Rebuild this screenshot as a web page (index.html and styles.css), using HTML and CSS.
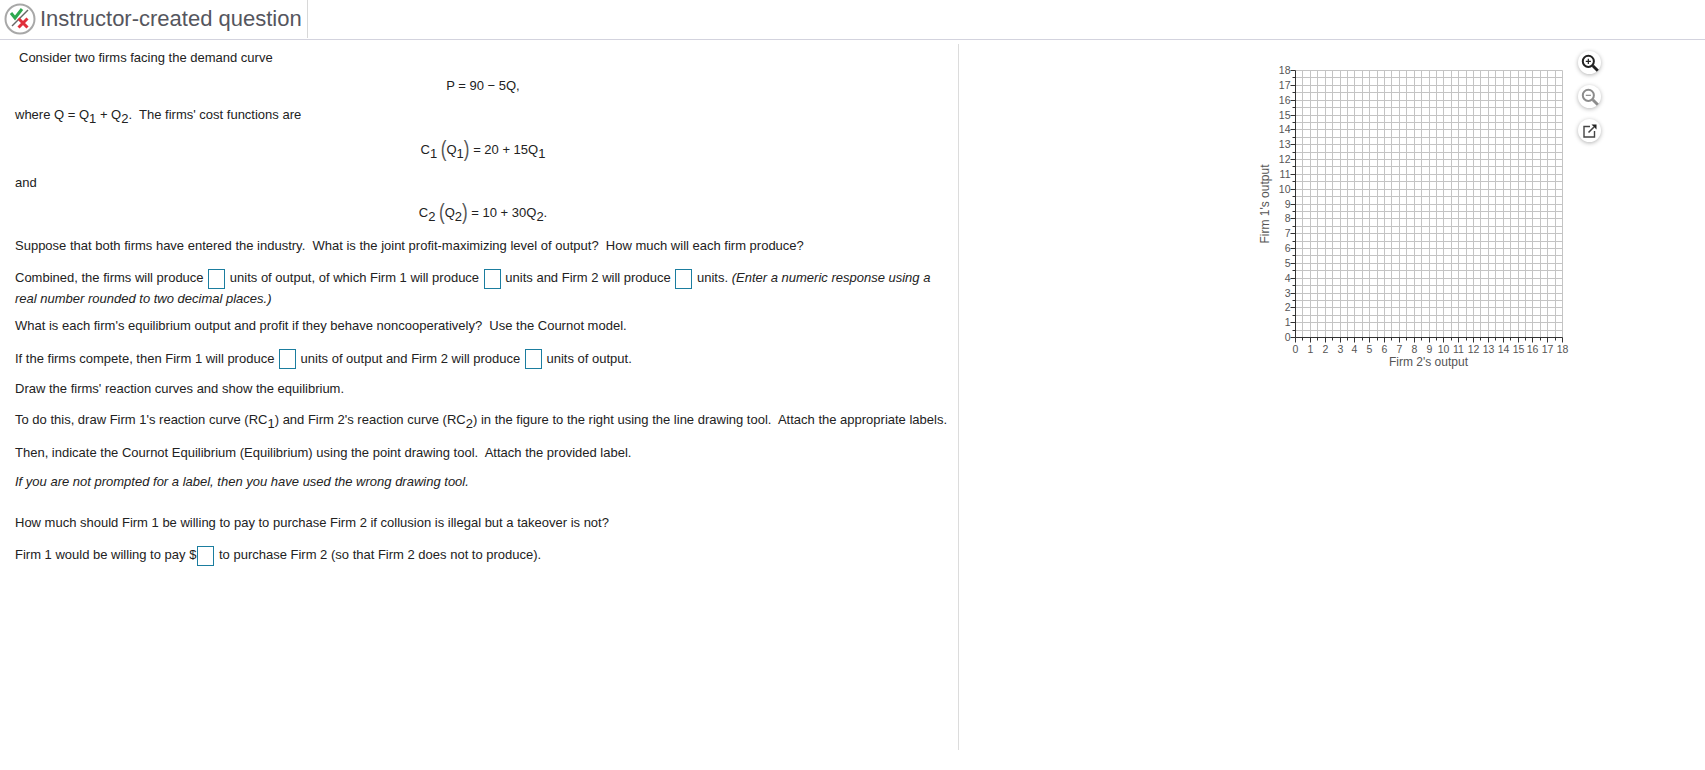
FILE: index.html
```html
<!DOCTYPE html>
<html lang="en">

<head>
    <meta charset="UTF-8">
    <title>Instructor-created question</title>
    <link rel="stylesheet" href="styles.css">
</head>

<body>

    <div class="header">
        <div class="title-box">
            <svg class="title-icon" width="32" height="32" viewBox="0 0 32 32">
                <circle cx="16" cy="16" r="14.5" fill="#fff" stroke="#a8a8a8" stroke-width="2" />
                <path d="M8 23 L24 7" stroke="#666" stroke-width="1.4" />
                <path d="M7 10 L11 15 L18 6" fill="none" stroke="#2fa84f" stroke-width="3" />
                <path d="M14.5 15.5 L23.5 24.5 M23.5 15.5 L14.5 24.5" stroke="#e0303c" stroke-width="3" />
            </svg>
            <h1>Instructor-created question</h1>
        </div>
    </div>

    <div class="main">
        <div class="question">
            <p class="intro">Consider two firms facing the demand curve</p>
            <p class="math first-math">P = 90 − 5Q,</p>
            <p class="where">where Q = Q<sub>1</sub> + Q<sub>2</sub>.&nbsp; The firms' cost functions are</p>
            <p class="math cost-one">C<sub>1</sub> <span class="paren">(</span>Q<sub>1</sub><span class="paren">)</span> = 20 + 15Q<sub>1</sub></p>
            <p class="and">and</p>
            <p class="math cost-two">C<sub>2</sub> <span class="paren">(</span>Q<sub>2</sub><span class="paren">)</span> = 10 + 30Q<sub>2</sub>.</p>
            <p class="suppose">Suppose that both firms have entered the industry.&nbsp; What is the joint profit-maximizing level of output?&nbsp; How much will each firm produce?</p>
            <p class="combined">Combined, the firms will produce <span class="answer"></span> units of output, of which Firm 1 will produce <span class="answer"></span> units and Firm 2 will produce <span class="answer"></span> units. <em>(Enter a numeric response using a real number rounded to two decimal places.)</em></p>
            <p class="gap-14">What is each firm's equilibrium output and profit if they behave noncooperatively?&nbsp; Use the Cournot model.</p>
            <p>If the firms compete, then Firm 1 will produce <span class="answer"></span> units of output and Firm 2 will produce <span class="answer"></span> units of output.</p>
            <p class="gap-12">Draw the firms' reaction curves and show the equilibrium.</p>
            <p class="gap-14">To do this, draw Firm 1's reaction curve (RC<sub>1</sub>) and Firm 2's reaction curve (RC<sub>2</sub>) in the figure to the right using the line drawing tool.&nbsp; Attach the appropriate labels.</p>
            <p>Then, indicate the Cournot Equilibrium (Equilibrium) using the point drawing tool.&nbsp; Attach the provided label.</p>
            <p class="hint"><em>If you are not prompted for a label, then you have used the wrong drawing tool.</em></p>
            <p class="gap-13">How much should Firm 1 be willing to pay to purchase Firm 2 if collusion is illegal but a takeover is not?</p>
            <p>Firm 1 would be willing to pay $<span class="answer dollar"></span> to purchase Firm 2 (so that Firm 2 does not to produce).</p>
        </div>

        <div class="figure">
            <svg id="graph" width="250" height="320" viewBox="1230 60 250 320"></svg>
            <div class="tools">
                <div class="tool">
                    <svg width="20" height="20" viewBox="0 0 18 18">
                        <circle cx="7.5" cy="7.5" r="5" fill="none" stroke="#222" stroke-width="1.8" />
                        <path d="M11.5 11.5 L16 16" stroke="#222" stroke-width="2.6" />
                        <path d="M5.2 7.5 H9.8 M7.5 5.2 V9.8" stroke="#222" stroke-width="1.1" />
                    </svg>
                </div>
                <div class="tool">
                    <svg width="20" height="20" viewBox="0 0 18 18">
                        <circle cx="7.5" cy="7.5" r="5" fill="none" stroke="#8c8c8c" stroke-width="1.8" />
                        <path d="M11.5 11.5 L16 16" stroke="#8c8c8c" stroke-width="2.6" />
                        <path d="M5.2 7.5 H9.8" stroke="#8c8c8c" stroke-width="1.1" />
                    </svg>
                </div>
                <div class="tool">
                    <svg width="18" height="18" viewBox="0 0 18 18">
                        <path d="M9 4.5 H3 V15 H13.5 V9" fill="none" stroke="#444" stroke-width="1.4" />
                        <path d="M7.5 10.5 L13 5" stroke="#444" stroke-width="1.6" />
                        <path d="M10.5 2.5 H15.5 V7.5 Z" fill="#222" />
                    </svg>
                </div>
            </div>
        </div>
    </div>

    <script>
        let graph = document.getElementById("graph");
        let ns = "http://www.w3.org/2000/svg";
        let left = 1295.5;
        let bottom = 337.5;
        let step = 267 / 36;

        // keep lines on whole pixels so they stay crisp
        function snap(value) {
            return Math.floor(value) + 0.5;
        }

        function addLine(x1, y1, x2, y2, color) {
            let line = document.createElementNS(ns, "line");
            line.setAttribute("x1", x1);
            line.setAttribute("y1", y1);
            line.setAttribute("x2", x2);
            line.setAttribute("y2", y2);
            line.setAttribute("stroke", color);
            graph.appendChild(line);
        }

        function addText(x, y, value, anchor, className) {
            let text = document.createElementNS(ns, "text");
            text.setAttribute("x", x);
            text.setAttribute("y", y);
            text.setAttribute("text-anchor", anchor);
            text.setAttribute("class", className);
            text.textContent = value;
            graph.appendChild(text);
            return text;
        }

        // grid first, axes and ticks go over it
        for (let i = 1; i <= 36; i++) {
            let x = snap(left + i * step);
            let y = snap(bottom - i * step);
            addLine(x, bottom, x, bottom - 267, "#c4c4c4");
            addLine(left, y, left + 267, y, "#c4c4c4");
        }
        addLine(left, bottom, left, bottom - 267, "#333");
        addLine(left, bottom, left + 267, bottom, "#333");

        for (let i = 0; i <= 36; i++) {
            let major = i % 2 == 0;
            let len = major ? 5 : 3;
            let x = snap(left + i * step);
            let y = snap(bottom - i * step);
            addLine(left - len, y, left, y, "#333");
            addLine(x, bottom, x, bottom + len, "#333");
            if (major) {
                addText(left - 5, y + 3.5, i / 2, "end", "tick-label");
                addText(x, bottom + 15, i / 2, "middle", "tick-label");
            }
        }

        addText(1428.5, 366, "Firm 2's output", "middle", "axis-label");
        let yLabel = addText(1269, 204, "Firm 1's output", "middle", "axis-label");
        yLabel.setAttribute("transform", "rotate(-90 1269 204)");
    </script>
</body>

</html>
```

FILE: styles.css
```css
body {
    margin: 0;
    height: 770px;
    overflow: hidden;
    background-color: #fff;
    font-family: "Liberation Sans", Arial, sans-serif;
    font-size: 13px;
    color: #222;
}

.header {
    display: flex;
    height: 39px;
    border-bottom: 1px solid #d3d3de;
}

.title-box {
    display: flex;
    align-items: center;
    gap: 4px;
    padding: 0 5px 0 4px;
    height: 38px;
    border-right: 1px solid #d8d8d8;
}

.title-icon {
    flex: none;
}

h1 {
    margin: 0;
    font-size: 22px;
    font-weight: normal;
    color: #55565e;
}

.main {
    display: flex;
    margin-top: 4px;
}

.question {
    box-sizing: border-box;
    width: 959px;
    height: 706px;
    padding: 4px 7px 0 15px;
    border-right: 1px solid #dcdcdc;
}

p {
    margin: 0 0 10px;
    line-height: 19px;
}

sub {
    font-size: 13px;
    line-height: 0;
    vertical-align: -4px;
}

.intro {
    margin-bottom: 9px;
    padding-left: 4px;
}

.math {
    text-align: center;
}

.paren {
    display: inline-block;
    font-size: 17px;
    line-height: 0;
    color: #555;
    transform: scaleY(1.35);
}

.first-math {
    margin-bottom: 10px;
}

.where {
    margin-bottom: 16px;
}

.cost-one {
    margin-bottom: 14px;
}

.and {
    margin-bottom: 11px;
}

.cost-two {
    margin-bottom: 14px;
}

.suppose {
    margin-bottom: 13px;
}

.combined {
    margin-bottom: 8px;
}

.gap-12 {
    margin-bottom: 12px;
}

.gap-13 {
    margin-bottom: 13px;
}

.gap-14 {
    margin-bottom: 14px;
}

.hint {
    margin-bottom: 22px;
}

.answer {
    display: inline-block;
    box-sizing: border-box;
    width: 17px;
    height: 20px;
    margin: 0 1px;
    border: 1px solid #1b7d9f;
    vertical-align: middle;
}

.dollar {
    margin-right: 1px;
}

.figure {
    display: flex;
    align-items: flex-start;
    margin-left: 271px;
}

#graph {
    flex: none;
    margin-top: 16px;
    overflow: visible;
}

.tick-label {
    font-size: 10.5px;
    fill: #555;
}

.axis-label {
    font-size: 12px;
    fill: #555;
}

.tools {
    display: flex;
    flex-direction: column;
    gap: 11px;
    margin-top: 7px;
    margin-left: 98px;
}

.tool {
    display: flex;
    justify-content: center;
    align-items: center;
    width: 23px;
    height: 23px;
    border-radius: 50%;
    background-color: #fff;
    box-shadow: 0 1px 4px rgba(0, 0, 0, 0.3);
}
```
